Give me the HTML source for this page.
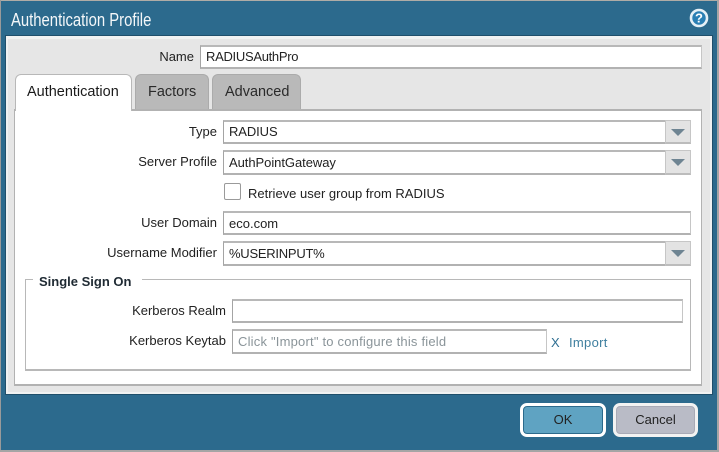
<!DOCTYPE html>
<html><head><meta charset="utf-8"><style>
html,body{margin:0;padding:0;width:719px;height:452px;overflow:hidden;background:#2c6a8d}
*{box-sizing:border-box}
body{font-family:"Liberation Sans",sans-serif;font-size:13px;color:#222;position:relative}
div{position:absolute}
.t{white-space:nowrap;line-height:16px;height:16px}
.r{text-align:right}
.i{background:#fff;border-style:solid;border-width:2px 1px 2px 1px;border-color:#b8b8b8 #c6c6c6 #b2b2b2 #a4a4a4}
.a{background:#e3e3e3;border:1px solid #c6c6c6;border-bottom:2px solid #bcbcbc;width:26px}
.a:after{content:"";position:absolute;left:5px;top:8px;border-left:7px solid transparent;border-right:7px solid transparent;border-top:7px solid #6e8492}
.tab{background:#b9b9b9;border:1px solid #ababab;border-bottom:0;border-radius:6px 6px 0 0;top:74px;height:35px}
.h{font-size:15px;line-height:17px;height:17px;transform:scaleX(.965);transform-origin:0 0}
</style></head><body>
<div style="left:0;top:0;width:719px;height:1px;background:#b0aca6"></div>
<div style="left:0;top:0;width:1px;height:452px;background:#9a9a9a"></div>
<div style="left:0;top:450px;width:719px;height:2px;background:#a5a5a5"></div>
<div style="left:717px;top:0;width:2px;height:452px;background:#a5a5a5"></div>
<div style="left:5px;top:35px;width:708px;height:360px;background:#e6e6e6;border:1px solid #1f4f6b;"></div>
<div style="left:6px;top:36px;width:706px;height:358px;border:2px solid #f0f2f2;border-top-width:3px"></div>
<div class="t" style="left:11px;top:10px;height:21px;line-height:21px;font-size:18px;color:#f4f7f9;transform:scaleX(.825);transform-origin:0 0">Authentication Profile</div>
<svg style="position:absolute;left:689px;top:8px" width="20" height="20" viewBox="0 0 20 20"><circle cx="10" cy="10" r="8" fill="#2a7fb4" stroke="#e6f0f6" stroke-width="2.6"/><text x="10" y="14.5" font-family="Liberation Sans" font-weight="bold" font-size="13" fill="#fff" text-anchor="middle">?</text></svg>

<div class="t r" style="left:100px;width:94px;top:49px">Name</div>
<div class="i" style="left:200px;top:45px;width:502px;height:24px"></div>
<div class="t" style="left:206px;top:49px;letter-spacing:-.3px">RADIUSAuthPro</div>

<div style="left:14px;top:109px;width:688px;height:277px;background:#fff;border:1px solid #b2b2b2;border-top-width:2px;border-bottom-width:2px"></div>
<div class="tab" style="left:135px;width:74px"></div>
<div class="tab" style="left:212px;width:89px"></div>
<div style="left:15px;top:74px;width:117px;height:37px;background:#fff;border:1px solid #b8b8b8;border-bottom:0;border-radius:6px 6px 0 0"></div>
<div class="t h" style="left:27px;top:83px;color:#1a1a1a">Authentication</div>
<div class="t h" style="left:148px;top:83px;color:#2a2a2a">Factors</div>
<div class="t h" style="left:225px;top:83px;color:#2a2a2a">Advanced</div>

<div class="t r" style="left:60px;width:157px;top:124px">Type</div>
<div class="i" style="left:223px;top:120px;width:444px;height:24px"></div>
<div class="a" style="left:665px;top:120px;height:24px"></div>
<div class="t" style="left:229px;top:124px;letter-spacing:-.1px">RADIUS</div>

<div class="t r" style="left:60px;width:157px;top:154px">Server Profile</div>
<div class="i" style="left:223px;top:150px;width:444px;height:25px"></div>
<div class="a" style="left:665px;top:150px;height:25px"></div>
<div class="t" style="left:229px;top:155px;letter-spacing:-.05px">AuthPointGateway</div>

<div style="left:224px;top:183px;width:17px;height:17px;background:#fff;border:1px solid #9a9a9a;border-radius:2px"></div>
<div class="t" style="left:248px;top:186px">Retrieve user group from RADIUS</div>

<div class="t r" style="left:60px;width:157px;top:215px">User Domain</div>
<div class="i" style="left:223px;top:211px;width:468px;height:24px"></div>
<div class="t" style="left:229px;top:216px">eco.com</div>

<div class="t r" style="left:60px;width:157px;top:245px">Username Modifier</div>
<div class="i" style="left:223px;top:241px;width:444px;height:25px"></div>
<div class="a" style="left:665px;top:241px;height:25px"></div>
<div class="t" style="left:229px;top:246px;letter-spacing:-.25px">%USERINPUT%</div>

<div style="left:25px;top:279px;width:666px;height:92px;border:1px solid #b8b8b8;border-width:1px 1px 2px 1px"></div>
<div style="left:33px;top:276px;width:109px;height:8px;background:#fff"></div>
<div class="t" style="left:39px;top:274px;font-weight:bold;color:#1f2a33">Single Sign On</div>

<div class="t r" style="left:100px;width:126px;top:303px">Kerberos Realm</div>
<div class="i" style="left:232px;top:299px;width:451px;height:24px"></div>
<div class="t r" style="left:100px;width:126px;top:333px">Kerberos Keytab</div>
<div class="i" style="left:232px;top:329px;width:315px;height:25px"></div>
<div class="t" style="left:238px;top:334px;color:#8a9499;letter-spacing:.2px">Click "Import" to configure this field</div>
<div class="t" style="left:551px;top:335px;color:#2f6f92">X</div>
<div class="t" style="left:569px;top:335px;color:#3f7f9f;letter-spacing:.3px">Import</div>

<div style="left:520px;top:403px;width:86px;height:34px;background:#5fa3c2;border:3px solid #fff;border-radius:7px;box-shadow:inset 0 0 0 1px #2b6a8c"></div>
<div class="t" style="left:520px;width:86px;top:412px;text-align:center">OK</div>
<div style="left:613px;top:403px;width:85px;height:34px;background:#b9bbc6;border:3px solid #f2f2f2;border-radius:7px;box-shadow:inset 0 0 0 1px #a8aab6"></div>
<div class="t" style="left:613px;width:85px;top:412px;text-align:center">Cancel</div>
</body></html>
